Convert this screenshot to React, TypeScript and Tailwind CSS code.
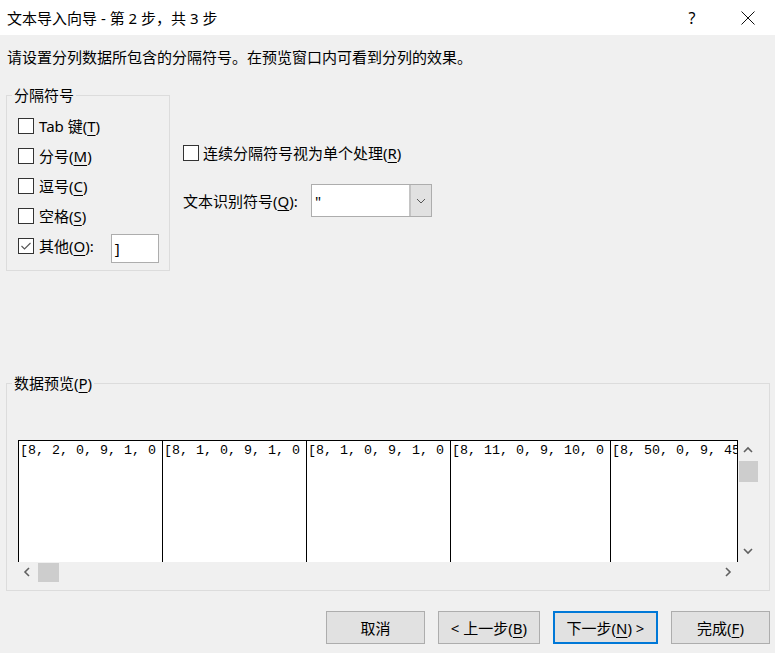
import { ReactNode } from 'react';

// underlined access key letter, e.g. (T)
function Key({ children }: { children: ReactNode }) {
  return <span className="underline underline-offset-[3px] decoration-1">{children}</span>;
}

function CheckBox({ checked = false }: { checked?: boolean }) {
  return (
    <span className="w-4 h-4 shrink-0 border border-[#333333] bg-white flex items-center justify-center">
      {checked && (
        <svg width="12" height="12" viewBox="0 0 12 12">
          <path d="M1.5 6 L4.5 9 L10.5 3" fill="none" stroke="#555" strokeWidth="1.1" />
        </svg>
      )}
    </span>
  );
}

function Chevron({ dir }: { dir: 'up' | 'down' | 'left' | 'right' }) {
  const paths = {
    up: 'M1 6 L5 2 L9 6',
    down: 'M1 2 L5 6 L9 2',
    left: 'M6 1 L2 5 L6 9',
    right: 'M3 1 L7 5 L3 9',
  };
  return (
    <svg width="10" height="10" viewBox="0 0 10 10">
      <path d={paths[dir]} fill="none" stroke="#606060" strokeWidth="1.6" />
    </svg>
  );
}

const delimiters = [
  { label: 'Tab 键', key: 'T' },
  { label: '分号', key: 'M' },
  { label: '逗号', key: 'C' },
  { label: '空格', key: 'S' },
];

const previewColumns = [
  { text: '[8, 2, 0, 9, 1, 0', width: 'w-[144px]' },
  { text: '[8, 1, 0, 9, 1, 0', width: 'w-[144px]' },
  { text: '[8, 1, 0, 9, 1, 0', width: 'w-[144px]' },
  { text: '[8, 11, 0, 9, 10, 0', width: 'w-[160px]' },
  { text: '[8, 50, 0, 9, 45, 0', width: 'w-[160px]' },
];

function DialogButton({ children, width, primary = false }: { children: ReactNode; width: string; primary?: boolean }) {
  return (
    <button
      className={`${width} h-[33px] bg-[#e1e1e1] flex items-center justify-center text-[15px] leading-[20px] text-black ${
        primary ? 'border-2 border-[#0078d7]' : 'border border-[#adadad]'
      }`}
    >
      {children}
    </button>
  );
}

export default function App() {
  return (
    <div className="w-[775px] h-[653px] bg-[#f0f0f0] flex flex-col overflow-hidden text-black font-['Noto_Sans','Noto_Sans_CJK_SC',sans-serif] text-[15px] leading-[20px]">
      {/* title bar */}
      <div className="h-[35px] shrink-0 bg-white flex items-center">
        <span className="pl-[7px]">文本导入向导 - 第 2 步，共 3 步</span>
        <div className="ml-auto flex h-full">
          <div className="w-[58px] flex items-center justify-center text-[16px]">?</div>
          <div className="w-[54px] flex items-center justify-center">
            <svg width="14" height="14" viewBox="0 0 14 14">
              <path d="M0.5 0.5 L13.5 13.5 M13.5 0.5 L0.5 13.5" stroke="#111" strokeWidth="1" />
            </svg>
          </div>
        </div>
      </div>

      <div className="px-[6px] flex flex-col">
        <p className="mt-[12px] pl-[1px]">请设置分列数据所包含的分隔符号。在预览窗口内可看到分列的效果。</p>

        <div className="mt-[18px] flex items-start">
          <fieldset className="w-[164px] border border-[#dcdcdc] pl-[5px] pb-[9px]">
            <legend className="px-[2px]">分隔符号</legend>
            <div className="mt-[6px] ml-[6px] flex flex-col">
              {delimiters.map(d => (
                <label key={d.key} className="h-[30px] flex items-center gap-[5px]">
                  <CheckBox />
                  <span>
                    {d.label}(<Key>{d.key}</Key>)
                  </span>
                </label>
              ))}
              <label className="h-[30px] flex items-center gap-[5px]">
                <CheckBox checked />
                <span>
                  其他(<Key>O</Key>):
                </span>
                <span className="ml-[12px] mt-[4px] w-[48px] h-[29px] border border-[#adadad] bg-white flex items-center pl-[3px]">
                  ]
                </span>
              </label>
            </div>
          </fieldset>

          <div className="ml-[13px] pt-[53px] flex flex-col">
            <label className="h-[30px] flex items-center gap-[4px]">
              <CheckBox />
              <span>
                连续分隔符号视为单个处理(<Key>R</Key>)
              </span>
            </label>
            <div className="mt-[16px] flex items-center">
              <span className="w-[128px]">
                文本识别符号(<Key>Q</Key>):
              </span>
              <div className="w-[121px] h-[33px] border border-[#adadad] bg-white flex">
                <span className="flex-1 pl-[3px] flex items-center">"</span>
                <span className="w-[22px] bg-[#e1e1e1] border-l-2 border-[#c4c4c4] flex items-center justify-center">
                  <svg width="10" height="6" viewBox="0 0 10 6">
                    <path d="M1 1 L5 5 L9 1" fill="none" stroke="#555" strokeWidth="1" />
                  </svg>
                </span>
              </div>
            </div>
          </div>
        </div>

        <fieldset className="mt-[102px] w-[764px] border border-[#dcdcdc] pl-[5px] pb-[8px]">
          <legend className="px-[2px]">
            数据预览(<Key>P</Key>)
          </legend>
          <div className="mt-[47px] ml-[6px] w-[740px] grid grid-cols-[720px_20px] grid-rows-[122px_20px]">
            <div className="bg-white border-t border-l border-r border-black flex overflow-hidden font-['Liberation_Mono',monospace] text-[13.33px] leading-[20px]">
              {previewColumns.map((c, i) => (
                <div key={i} className={`${c.width} shrink-0 h-full border-r border-black pl-[1px] whitespace-pre overflow-hidden`}>
                  {c.text}
                </div>
              ))}
            </div>

            {/* vertical scrollbar */}
            <div className="flex flex-col items-center">
              <div className="h-[21px] flex items-center justify-center">
                <Chevron dir="up" />
              </div>
              <div className="w-[19px] h-[21px] ml-[1px] bg-[#cdcdcd]" />
              <div className="flex-1" />
              <div className="h-[20px] flex items-center justify-center">
                <Chevron dir="down" />
              </div>
            </div>

            {/* horizontal scrollbar */}
            <div className="flex items-center">
              <div className="w-[20px] h-full flex items-center justify-center">
                <Chevron dir="left" />
              </div>
              <div className="w-[21px] h-[19px] mt-[1px] bg-[#cdcdcd]" />
              <div className="flex-1" />
              <div className="w-[20px] h-full flex items-center justify-center">
                <Chevron dir="right" />
              </div>
            </div>
            <div />
          </div>
        </fieldset>
      </div>

      <div className="mt-[20px] pr-[5px] flex justify-end gap-[13px]">
        <DialogButton width="w-[99px]">取消</DialogButton>
        <DialogButton width="w-[102px]">
          &lt; 上一步(<Key>B</Key>)
        </DialogButton>
        <DialogButton width="w-[105px]" primary>
          下一步(<Key>N</Key>) &gt;
        </DialogButton>
        <DialogButton width="w-[99px]">
          完成(<Key>F</Key>)
        </DialogButton>
      </div>
    </div>
  );
}
